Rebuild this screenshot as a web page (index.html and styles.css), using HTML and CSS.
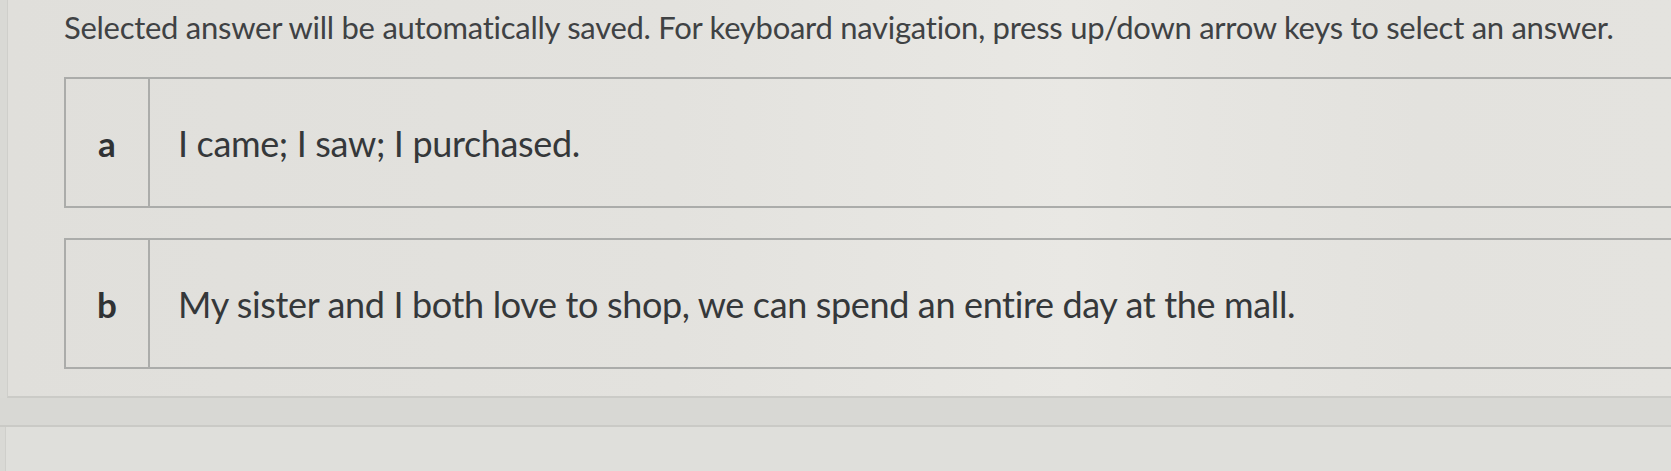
FILE: index.html
```html
<!DOCTYPE html>
<html lang="en">
<head>
<meta charset="utf-8">
<title>Question</title>
<link rel="stylesheet" href="styles.css">
</head>
<body>
<div class="panel">
  <p class="hint">Selected answer will be automatically saved. For keyboard navigation, press up/down arrow keys to select an answer.</p>
  <div class="options" role="radiogroup">
    <div class="option" role="radio" aria-checked="false">
      <div class="letter">a</div>
      <div class="answer">I came; I saw; I purchased.</div>
    </div>
    <div class="option" role="radio" aria-checked="false">
      <div class="letter">b</div>
      <div class="answer">My sister and I both love to shop, we can spend an entire day at the mall.</div>
    </div>
  </div>
</div>
<div class="gap-band"></div>
<div class="next-panel"></div>
</body>
</html>
```
FILE: styles.css
```css
html, body {
  margin: 0;
  padding: 0;
}
body {
  background: #d9d9d5;
  font-family: "Lato", "Open Sans", sans-serif;
  color: #3b3e40;
  overflow: hidden;
  height: 471px;
}
.panel {
  margin-left: 7px;
  height: 398px;
  box-sizing: border-box;
  padding: 9px 0 0 56px;
  background: linear-gradient(90deg, #e0dfdb 0%, #e3e2de 40%, #e9e8e4 64%, #e6e5e1 72%, #e3e2de 85%, #e4e3df 100%);
  border-bottom: 2px solid #cbcbc7;
  border-left: 1px solid #cfcfcb;
}
.hint {
  margin: 0;
  font-size: 31px;
  line-height: 36px;
  letter-spacing: -0.27px;
  color: #3f4244;
}
.options {
  margin-top: 32px;
  display: flex;
  flex-direction: column;
  gap: 30px;
}
.option {
  display: flex;
  height: 131px;
  box-sizing: border-box;
  border: 2px solid #abacaa;
  border-right: none;
}
.letter {
  width: 82px;
  flex: none;
  border-right: 2px solid #abacaa;
  display: flex;
  align-items: center;
  justify-content: center;
  font-size: 35px;
  font-weight: 700;
  color: #2f3234;
}
.answer {
  display: flex;
  align-items: center;
  padding-left: 28px;
  font-size: 36px;
  letter-spacing: -0.36px;
  color: #35383a;
}
.gap-band {
  height: 27px;
  background: #d8d8d4;
  border-bottom: 2px solid #cacac6;
}
.next-panel {
  margin-left: 5px;
  height: 60px;
  background: #dfdfdb;
  border-left: 1px solid #cfcfcb;
}
```
